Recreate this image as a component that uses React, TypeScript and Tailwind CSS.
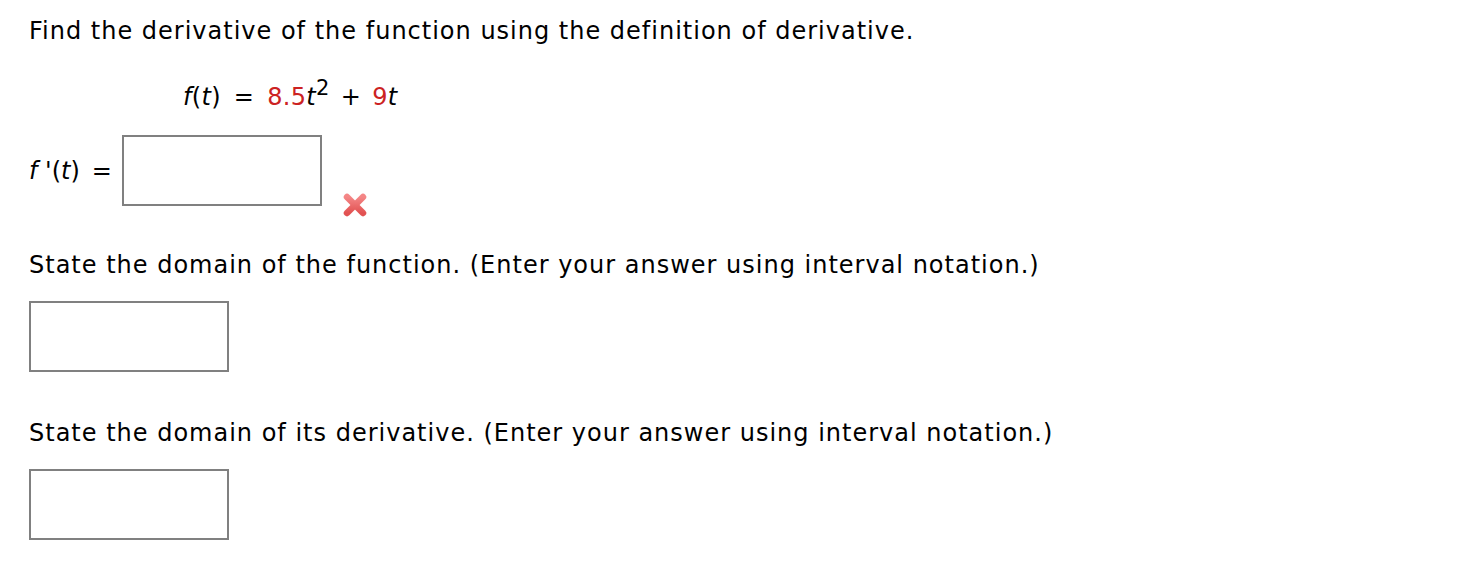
import React from 'react';

const Box: React.FC<{ className?: string }> = ({ className = '' }) => (
  <div className={`w-[200px] h-[71px] border-2 border-[#808080] bg-white ${className}`} />
);

const RedX: React.FC = () => (
  <svg width="24" height="24" viewBox="0 0 24 24" className="block">
    <defs>
      <linearGradient id="xg" x1="0" y1="0" x2="0" y2="1">
        <stop offset="0" stopColor="#f48686" />
        <stop offset="1" stopColor="#e25252" />
      </linearGradient>
    </defs>
    <g stroke="url(#xg)" strokeWidth="6.5" strokeLinecap="round">
      <line x1="4" y1="4" x2="20" y2="20" />
      <line x1="20" y1="4" x2="4" y2="20" />
    </g>
  </svg>
);

export default function App() {
  return (
    <div className="w-[1460px] h-[574px] bg-white text-black text-[24px] leading-none tracking-[1px] font-['DejaVu_Sans','Verdana',sans-serif] pl-[29px] pt-[19px]">
      <p>Find the derivative of the function using the definition of derivative.</p>

      <p className="pl-[154px] pt-[42px] tracking-[0.3px]">
        <i>f</i>(<i>t</i>)
        <span className="inline-block mx-[13px]">=</span>
        <span className="text-[#cc2222]">8.5</span>
        <i>t</i>
        <span className="relative -top-[10px] text-[21px]">2</span>
        <span className="inline-block mx-[11px]">+</span>
        <span className="text-[#cc2222]">9</span>
        <i>t</i>
      </p>

      <div className="flex items-start pt-[26px]">
        <div className="flex items-center h-[71px] tracking-normal whitespace-pre">
          <span><i>f</i> '(<i>t</i>)</span>
          <span className="ml-[12px] mr-[10px]">=</span>
        </div>
        <Box />
        <div className="ml-[21px] mt-[58px]">
          <RedX />
        </div>
      </div>

      <p className="pt-[36px]">State the domain of the function. (Enter your answer using interval notation.)</p>
      <Box className="mt-[24px]" />

      <p className="pt-[49px]">State the domain of its derivative. (Enter your answer using interval notation.)</p>
      <Box className="mt-[24px]" />
    </div>
  );
}
